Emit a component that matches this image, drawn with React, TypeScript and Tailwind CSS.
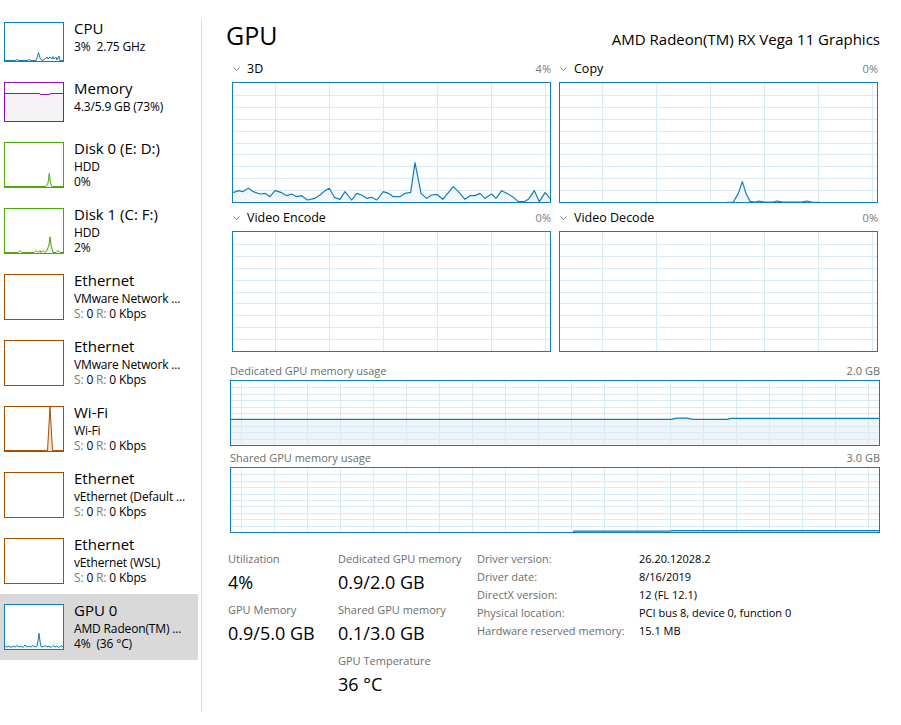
import React from "react";

type P = number[][];
const pts = (a: P) => a.map((p) => `${p[0]},${p[1]}`).join(" ");
const area = (a: P, bottom: number) =>
  pts([[a[0][0], bottom], ...a, [a[a.length - 1][0], bottom]]);

function Thumb({
  color,
  fill,
  tall,
  data,
}: {
  color: string;
  fill?: string;
  tall: boolean;
  data?: P;
}) {
  const h = tall ? 44 : 38;
  return (
    <div
      className={`${tall ? "h-[46px]" : "h-[40px]"} w-[60px] shrink-0 border bg-white`}
      style={{ borderColor: color }}
    >
      <svg width={58} height={h} viewBox={`0 0 58 ${h}`} className="block">
        {data && (
          <>
            <polygon points={area(data, h)} fill={fill} />
            <polyline points={pts(data)} fill="none" stroke={color} strokeWidth={1} />
          </>
        )}
      </svg>
    </div>
  );
}

const SR = () => (
  <span>
    <span className="text-[#7a7a7a]">S:</span> 0 <span className="text-[#7a7a7a]">R:</span> 0 Kbps
  </span>
);

const cpuData: P = [
  [0, 37.5], [10, 37.5], [12, 36.5], [14, 37.5], [22, 37.5], [24, 36.5], [26, 37.5], [31, 37.5], [32, 35],
  [33.5, 29.5], [35, 35], [37, 37.5], [40, 36], [42, 34], [43, 36], [45, 34], [47, 36], [48, 33.5], [49, 36],
  [51, 34], [52, 37], [54, 33], [55, 37.5], [58, 37.5],
];
const memData: P = [[0, 10.5], [34, 10.5], [36, 11.5], [44, 11.5], [46, 10.5], [58, 10.5]];
const disk0Data: P = [[0, 43.5], [41, 43.5], [43, 40], [44.3, 30.3], [45.5, 40], [47, 43.5], [58, 43.5]];
const disk1Data: P = [
  [0, 43.5], [13, 43.5], [15, 41.5], [17, 43.5], [29, 43.5], [31, 41.5], [33, 43.5], [35, 41.5], [36, 43.5],
  [38, 41.5], [40, 43.5], [42, 41], [44, 36], [45, 27.7], [46, 36], [48, 43.5], [51, 43.5], [53, 41.5], [55, 43.5],
  [58, 43.5],
];
const wifiData: P = [[0, 43.5], [42.5, 43.5], [45, 0], [47.5, 43.5], [58, 43.5]];
const gpuThumb: P = [
  [0, 41], [2, 42], [4, 41], [6, 42.5], [8, 41], [10, 42], [12, 40.5], [14, 42], [16, 41], [18, 42.5], [20, 40],
  [22, 42], [24, 41], [26, 42], [28, 40.5], [30, 42], [32, 41], [33, 36], [34, 28.3], [35, 36], [36, 41.5], [38, 42],
  [40, 40.5], [42, 42], [44, 41], [46, 42.5], [48, 40.5], [50, 42], [52, 41], [54, 42.5], [56, 40.5], [58, 42],
];

type Item = {
  title: string;
  lines: React.ReactNode[];
  color: string;
  fill?: string;
  tall: boolean;
  data?: P;
  selected?: boolean;
};

const items: Item[] = [
  { title: "CPU", lines: ["3%  2.75 GHz"], color: "#117dbb", fill: "#f1f6fa", tall: false, data: cpuData },
  { title: "Memory", lines: ["4.3/5.9 GB (73%)"], color: "#8b12ae", fill: "#f4f2f4", tall: false, data: memData },
  { title: "Disk 0 (E: D:)", lines: ["HDD", "0%"], color: "#4da60c", fill: "#eff7e8", tall: true, data: disk0Data },
  { title: "Disk 1 (C: F:)", lines: ["HDD", "2%"], color: "#4da60c", fill: "#eff7e8", tall: true, data: disk1Data },
  { title: "Ethernet", lines: ["VMware Network ...", <SR key="s" />], color: "#a74f01", tall: true },
  { title: "Ethernet", lines: ["VMware Network ...", <SR key="s" />], color: "#a74f01", tall: true },
  { title: "Wi-Fi", lines: ["Wi-Fi", <SR key="s" />], color: "#a74f01", fill: "#f6e4d4", tall: true, data: wifiData },
  { title: "Ethernet", lines: ["vEthernet (Default ...", <SR key="s" />], color: "#a74f01", tall: true },
  { title: "Ethernet", lines: ["vEthernet (WSL)", <SR key="s" />], color: "#a74f01", tall: true },
  {
    title: "GPU 0",
    lines: ["AMD Radeon(TM) ...", "4%  (36 °C)"],
    color: "#117dbb",
    fill: "#f1f6fa",
    tall: true,
    data: gpuThumb,
    selected: true,
  },
];

function SideItem({ it }: { it: Item }) {
  return (
    <div
      className={`flex w-[198px] pl-[4px] ${it.tall ? "h-[66px]" : "h-[60px]"} ${
        it.selected ? "bg-[#d9d9d9]" : ""
      }`}
    >
      <div className="mt-[10px]">
        <Thumb color={it.color} fill={it.fill} tall={it.tall} data={it.data} />
      </div>
      <div className="ml-[10px] mt-[6px] whitespace-pre">
        <div className="text-[15px] leading-[20px] text-black">{it.title}</div>
        <div className="mt-[1px]">
          {it.lines.map((l, i) => (
            <div key={i} className="text-[12px] leading-[15px] tracking-[-0.15px] text-black">
              {l}
            </div>
          ))}
        </div>
      </div>
    </div>
  );
}

const GRID = "#d9eaf4";
const LINE = "#117dbb";
const FILL = "#f1f6fa";

function BigGraph({ data }: { data?: P }) {
  const vx = [42.5, 96.5, 150.5, 204.5, 258.5, 312.5];
  const hy = [1, 2, 3, 4, 5, 6, 7, 8, 9].map((k) => Math.round(11.9 * k) + 0.5);
  return (
    <div className="h-[121px] w-full border border-[#117dbb] bg-white">
      <svg viewBox="0 0 317 119" width={317} height={119} className="block">
        {vx.map((x) => (
          <line key={"v" + x} x1={x} x2={x} y1={0} y2={119} stroke={GRID} strokeWidth={1} />
        ))}
        {hy.map((y) => (
          <line key={"h" + y} x1={0} x2={317} y1={y} y2={y} stroke={GRID} strokeWidth={1} />
        ))}
        {data && (
          <>
            <polygon points={area(data, 119)} fill={FILL} fillOpacity={0.85} />
            <polyline points={pts(data)} fill="none" stroke={LINE} strokeWidth={1.2} strokeLinejoin="round" />
          </>
        )}
      </svg>
    </div>
  );
}

const raw3d: P = [
  [40, 128], [55, 122], [68, 125], [85, 115], [100, 125], [120, 132], [135, 130], [150, 140], [165, 122],
  [185, 128], [200, 137], [215, 132], [230, 140], [245, 137], [262, 150], [285, 145], [300, 135], [315, 122],
  [328, 115], [343, 142], [360, 148], [375, 125], [395, 150], [410, 130], [425, 135], [440, 145], [455, 142],
  [470, 150], [490, 125], [505, 130], [520, 140], [540, 140], [555, 130], [572, 127], [585, 38], [603, 130],
  [620, 145], [635, 135], [650, 133], [668, 148], [685, 128], [700, 110], [718, 128], [735, 148], [750, 137],
  [765, 137], [780, 130], [795, 145], [815, 132], [828, 145], [845, 122], [860, 130], [878, 140], [895, 155],
  [912, 155], [925, 148], [943, 122], [958, 155], [975, 128], [990, 145],
];
const data3d: P = raw3d.map(([x, y]) => [x / 3 - 13, y / 3 + 67]);
const rawCopy: P = [
  [500, 157], [520, 156], [535, 130], [547, 95], [558, 130], [570, 154], [585, 156], [598, 153], [612, 156],
  [640, 156], [652, 153], [668, 156], [725, 156], [740, 153], [755, 156], [780, 157],
];
const dataCopy: P = rawCopy.map(([x, y]) => [x / 3, y / 3 + 67]);

function Chevron() {
  return (
    <svg width="7" height="5" viewBox="0 0 7 5" className="block">
      <polyline points="0.5,0.5 3.5,3.5 6.5,0.5" fill="none" stroke="#7a7a7a" strokeWidth="1" />
    </svg>
  );
}

function GraphCell({ label, pct, data }: { label: string; pct: string; data?: P }) {
  return (
    <div>
      <div className="flex h-[16px] items-center justify-between">
        <div className="flex items-center">
          <div className="ml-[1px] mr-[7px] mt-[1px]">
            <Chevron />
          </div>
          <span className="text-[12.5px] leading-[16px] text-black">{label}</span>
        </div>
        <span className="text-[11px] leading-[16px] text-[#7a7a7a]">{pct}</span>
      </div>
      <div className="mt-[5px]">
        <BigGraph data={data} />
      </div>
    </div>
  );
}

function MemGraph({ data }: { data: P }) {
  const vx = Array.from({ length: 20 }, (_, k) => 10.5 + 33 * k);
  const hy = [1, 2, 3, 4, 5, 6, 7, 8, 9].map((k) => Math.round(6.4 * k) + 0.5);
  return (
    <div className="h-[66px] w-full border border-[#117dbb] bg-white">
      <svg viewBox="0 0 648 64" width={648} height={64} className="block">
        <polygon points={area(data, 64)} fill="#eff4f9" />
        {vx.map((x) => (
          <line key={"v" + x} x1={x} x2={x} y1={0} y2={64} stroke={GRID} strokeWidth={1} />
        ))}
        {hy.map((y) => (
          <line key={"h" + y} x1={0} x2={648} y1={y} y2={y} stroke={GRID} strokeWidth={1} />
        ))}
        <polyline points={pts(data)} fill="none" stroke={LINE} strokeWidth={1.3} />
      </svg>
    </div>
  );
}

const dedData: P = [
  [0, 38.3], [440, 38.3], [446, 37.2], [456, 37.2], [462, 38.3], [496, 38.3], [500, 37.3], [648, 37.3],
];
const sharedData: P = [[342, 63.2], [438, 63.2], [442, 62.6], [648, 62.6]];

function Stat({ label, value }: { label: string; value: string }) {
  return (
    <div className="mb-[9px]">
      <div className="text-[11px] leading-[14px] text-[#6d6d6d] whitespace-nowrap">{label}</div>
      <div className="mt-[4px] text-[18px] leading-[24px] text-black whitespace-nowrap">{value}</div>
    </div>
  );
}

const info: [string, string][] = [
  ["Driver version:", "26.20.12028.2"],
  ["Driver date:", "8/16/2019"],
  ["DirectX version:", "12 (FL 12.1)"],
  ["Physical location:", "PCI bus 8, device 0, function 0"],
  ["Hardware reserved memory:", "15.1 MB"],
];

export default function App() {
  return (
    <div className="flex h-[725px] w-[901px] overflow-hidden bg-white font-['Open_Sans',sans-serif]">
      <div className="w-[201px] shrink-0 pt-[12px]">
        {items.map((it, i) => (
          <SideItem key={i} it={it} />
        ))}
      </div>
      <div className="mt-[20px] h-[692px] w-[1px] shrink-0 bg-[#dcdcdc]" />
      <div className="flex-1 pl-[28px] pr-[21px]">
        <div className="mt-[18px] flex items-baseline justify-between">
          <div className="-ml-[4px] text-[25px] leading-[34px] text-black">GPU</div>
          <div className="text-[15px] leading-[20px] text-black">AMD Radeon(TM) RX Vega 11 Graphics</div>
        </div>
        <div className="mt-[9px] grid grid-cols-2 gap-x-[8px] gap-y-[7px] px-[2px]">
          <GraphCell label="3D" pct="4%" data={data3d} />
          <GraphCell label="Copy" pct="0%" data={dataCopy} />
          <GraphCell label="Video Encode" pct="0%" />
          <GraphCell label="Video Decode" pct="0%" />
        </div>
        <div className="mt-[12px]">
          <div className="flex justify-between text-[11px] leading-[14px] text-[#6d6d6d]">
            <span>Dedicated GPU memory usage</span>
            <span>2.0 GB</span>
          </div>
          <div className="mt-[2px]">
            <MemGraph data={dedData} />
          </div>
          <div className="mt-[5px] flex justify-between text-[11px] leading-[14px] text-[#6d6d6d]">
            <span>Shared GPU memory usage</span>
            <span>3.0 GB</span>
          </div>
          <div className="mt-[2px]">
            <MemGraph data={sharedData} />
          </div>
        </div>
        <div className="-ml-[2px] mt-[19px] flex">
          <div className="w-[110px]">
            <Stat label="Utilization" value="4%" />
            <Stat label="GPU Memory" value="0.9/5.0 GB" />
          </div>
          <div className="w-[139px]">
            <Stat label="Dedicated GPU memory" value="0.9/2.0 GB" />
            <Stat label="Shared GPU memory" value="0.1/3.0 GB" />
            <Stat label="GPU Temperature" value="36 °C" />
          </div>
          <div className="-mt-[2px]">
            {info.map(([k, v]) => (
              <div key={k} className="flex text-[11px] leading-[18px]">
                <span className="w-[162px] text-[#6d6d6d]">{k}</span>
                <span className="text-black whitespace-nowrap">{v}</span>
              </div>
            ))}
          </div>
        </div>
      </div>
    </div>
  );
}
